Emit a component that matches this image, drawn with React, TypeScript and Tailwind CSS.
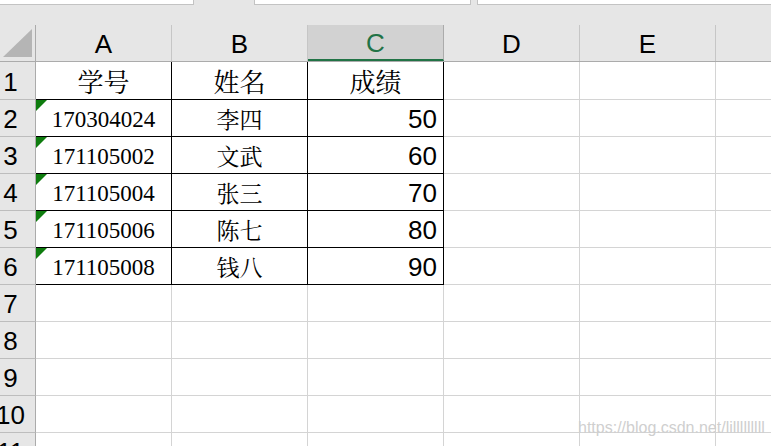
import React from "react";

const COLS = ["A", "B", "C", "D", "E", "F"];

const DATA: string[][] = [
  ["学号", "姓名", "成绩"],
  ["170304024", "李四", "50"],
  ["171105002", "文武", "60"],
  ["171105004", "张三", "70"],
  ["171105006", "陈七", "80"],
  ["171105008", "钱八", "90"],
];

const ROWS = [1, 2, 3, 4, 5, 6, 7, 8, 9, 10, 11];

function TopBar() {
  return (
    <div className="flex h-[25px] w-full shrink-0 items-start bg-[#e6e6e6]">
      <div className="h-[5px] w-[194px] border-b border-r border-[#c3c3c3] bg-white" />
      <div className="ml-[60px] h-[5px] w-[217px] border-x border-b border-[#c3c3c3] bg-white" />
      <div className="ml-[6px] h-[5px] flex-1 border-b border-l border-[#c3c3c3] bg-white" />
    </div>
  );
}

function ColumnHeader() {
  return (
    <div className="flex h-[37px] shrink-0 border-b border-[#ababab] bg-[#e6e6e6]">
      <div className="relative w-[36px] shrink-0 border-r border-[#ababab]">
        <svg className="absolute left-[3px] top-[4px]" width="30" height="29" viewBox="0 0 30 29">
          <polygon points="0,28 29,28 29,0" fill="#b5b5b5" />
        </svg>
      </div>
      {COLS.map((c) =>
        c === "C" ? (
          <div
            key={c}
            className="flex w-[136px] shrink-0 items-center justify-center border-b-2 border-r border-b-[#217346] border-r-[#ababab] bg-[#d2d2d2] pt-[1px] font-['Liberation_Sans',sans-serif] text-[26px] leading-none text-[#217346]"
          >
            {c}
          </div>
        ) : (
          <div
            key={c}
            className="flex w-[136px] shrink-0 items-center justify-center border-r border-[#c6c6c6] pt-[1px] font-['Liberation_Sans',sans-serif] text-[26px] leading-none text-black"
          >
            {c === "F" ? "" : c}
          </div>
        )
      )}
    </div>
  );
}

function DataCell({ r, ci }: { r: number; ci: number }) {
  const value = DATA[r - 1][ci];
  if (r === 1) {
    return (
      <div className="flex w-[136px] shrink-0 items-center justify-center border-b border-r border-black font-['Noto_Serif_CJK_SC','Noto_Sans_CJK_SC',serif] text-[26px] leading-none text-black">
        {value}
      </div>
    );
  }
  if (ci === 0) {
    return (
      <div className="relative flex w-[136px] shrink-0 items-center justify-center border-b border-r border-black pt-[3px] font-['Liberation_Serif',serif] text-[23px] leading-none text-black">
        <svg className="absolute left-0 top-0" width="11" height="11" viewBox="0 0 11 11">
          <polygon points="0,0 11,0 0,11" fill="#0e7c0e" />
        </svg>
        {value}
      </div>
    );
  }
  if (ci === 1) {
    return (
      <div className="flex w-[136px] shrink-0 items-center justify-center border-b border-r border-black pt-[1px] font-['Noto_Serif_CJK_SC','Noto_Sans_CJK_SC',serif] text-[23px] leading-none text-black">
        {value}
      </div>
    );
  }
  return (
    <div className="flex w-[136px] shrink-0 items-center justify-end border-b border-r border-black pr-[6px] pt-[1px] font-['Liberation_Sans',sans-serif] text-[26px] leading-none text-black">
      {value}
    </div>
  );
}

function Row({ r }: { r: number }) {
  const h = r === 1 ? "h-[38px]" : "h-[37px]";
  const hasData = r <= 6;
  return (
    <div className={`flex ${h} shrink-0`}>
      <div className="flex w-[36px] shrink-0 items-center border-b border-r border-b-[#bdbdbd] border-r-[#ababab] bg-[#e6e6e6] pt-[2px]">
        <div className="flex w-[21px] justify-center whitespace-nowrap font-['Liberation_Sans',sans-serif] text-[26px] leading-none text-black">
          {r}
        </div>
      </div>
      {COLS.map((c, ci) =>
        hasData && ci < 3 ? (
          <DataCell key={c} r={r} ci={ci} />
        ) : (
          <div key={c} className="w-[136px] shrink-0 border-b border-r border-[#d4d4d4]" />
        )
      )}
    </div>
  );
}

export default function App() {
  return (
    <div className="relative flex h-[446px] w-[771px] flex-col overflow-hidden bg-white">
      <TopBar />
      <ColumnHeader />
      {ROWS.map((r) => (
        <Row key={r} r={r} />
      ))}
      <div className="absolute left-[578px] top-[420px] whitespace-nowrap font-['Liberation_Sans',sans-serif] text-[16px] leading-none text-[#cfcfcf]">
        https://blog.csdn.net/lilllllllll
      </div>
    </div>
  );
}
